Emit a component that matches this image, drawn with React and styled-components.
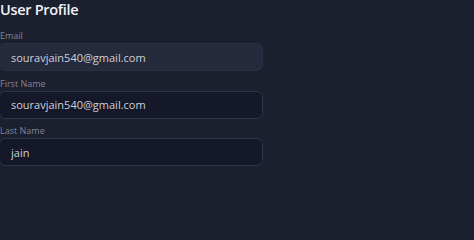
import React from 'react';
import styled, { createGlobalStyle } from 'styled-components';

const GlobalStyle = createGlobalStyle`
  html, body {
    margin: 0;
    padding: 0;
    background: #1c1f2e;
  }
  body {
    font-family: "Open Sans", "Noto Sans", sans-serif;
  }
`;

const Page = styled.div`
  display: flex;
  flex-direction: column;
  width: 264px;
  margin-left: -1px;
  padding-top: 1px;
`;

const Title = styled.h2`
  margin: 0 0 0 1px;
  font-size: 14.5px;
  font-weight: 600;
  color: #f1f2f6;
  line-height: 18px;
  letter-spacing: -0.3px;
`;

const Form = styled.div`
  display: flex;
  flex-direction: column;
  gap: 6.5px;
  margin-top: 11px;
`;

const Field = styled.div`
  display: flex;
  flex-direction: column;
  gap: 2px;
`;

const Label = styled.label`
  font-size: 9px;
  color: #7f8497;
  line-height: 11px;
  padding-left: 1px;
`;

const Input = styled.input`
  box-sizing: border-box;
  width: 100%;
  height: 28px;
  padding: 0 11px;
  border-radius: 6px;
  border: 1px solid ${p => (p.$filled ? '#2b3044' : '#2f3449')};
  background: ${p => (p.$filled ? '#252a3d' : '#151828')};
  color: #cdd0da;
  font-family: inherit;
  font-size: 11px;
  outline: none;
`;

const fields = [
  { label: 'Email', value: 'souravjain540@gmail.com', filled: true },
  { label: 'First Name', value: 'souravjain540@gmail.com' },
  { label: 'Last Name', value: 'jain' },
];

export default function App() {
  return (
    <>
      <GlobalStyle />
      <Page>
        <Title>User Profile</Title>
        <Form>
          {fields.map(f => (
            <Field key={f.label}>
              <Label>{f.label}</Label>
              <Input $filled={f.filled} defaultValue={f.value} readOnly={f.filled} />
            </Field>
          ))}
        </Form>
      </Page>
    </>
  );
}
